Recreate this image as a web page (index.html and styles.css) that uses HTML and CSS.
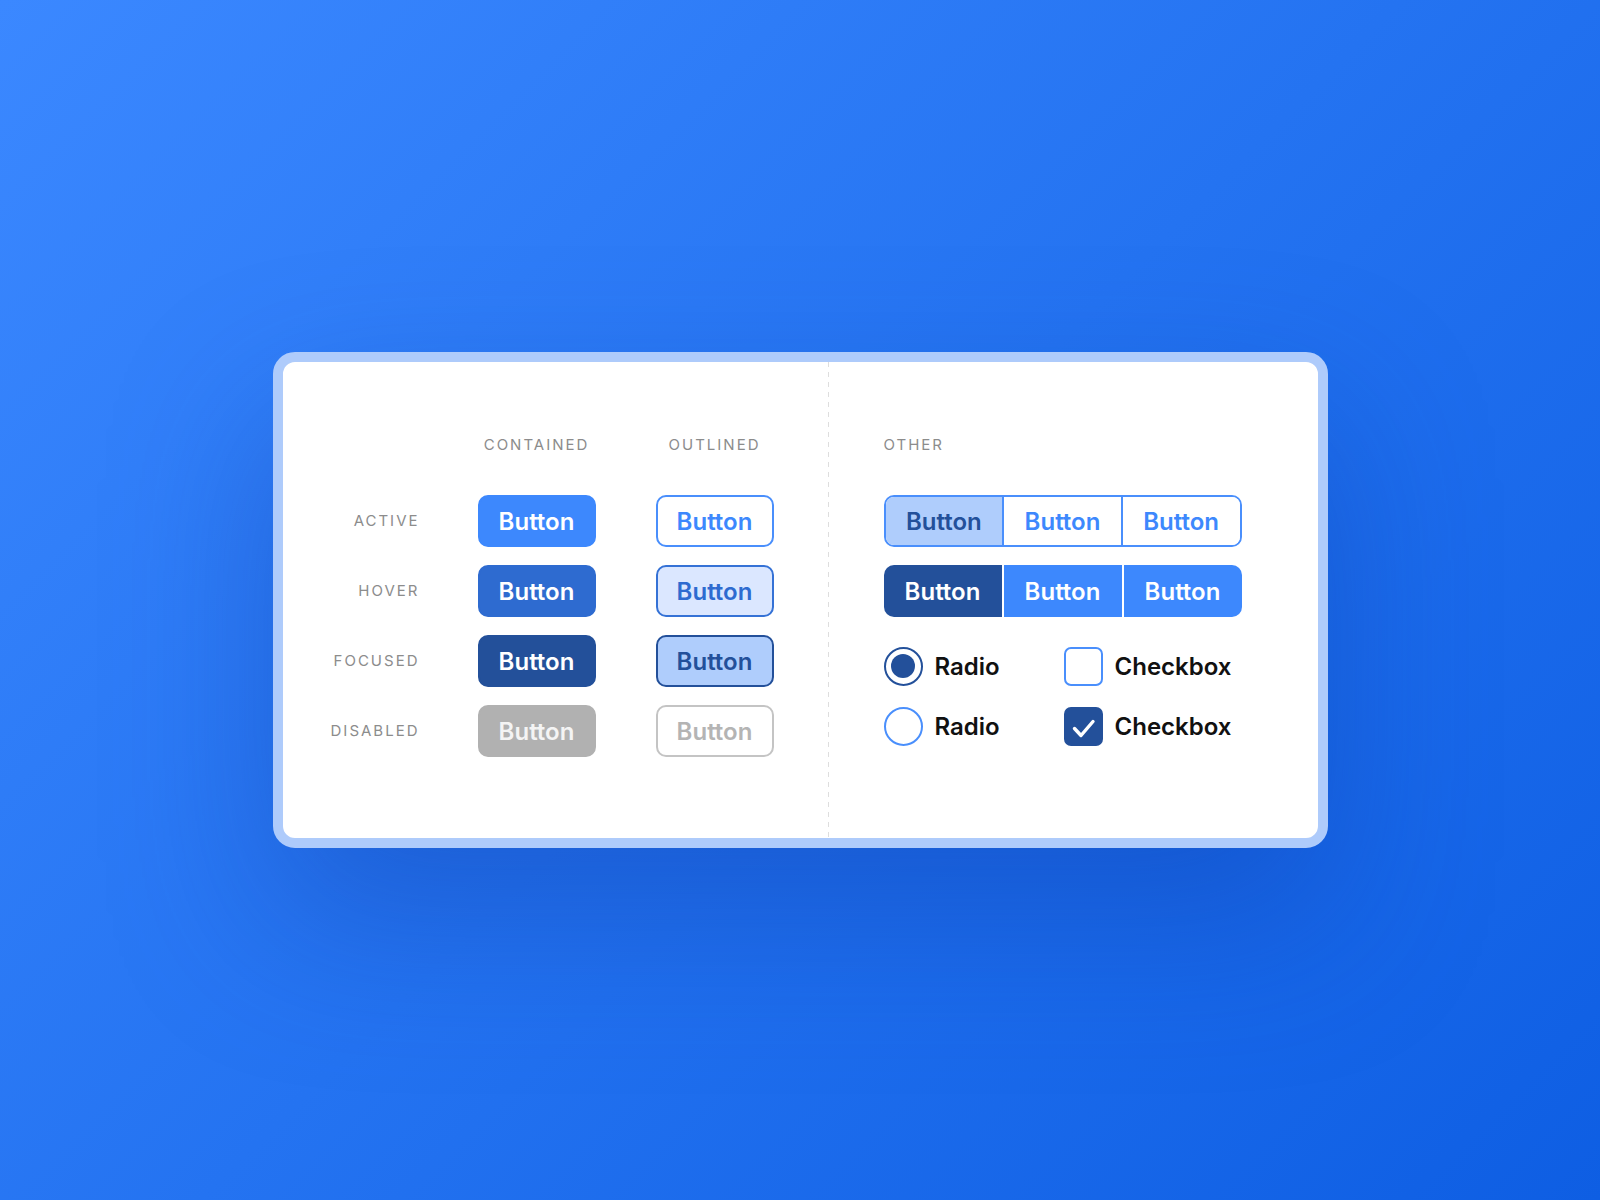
FILE: index.html
```html
<!DOCTYPE html>
<html lang="en">
<head>
    <meta charset="UTF-8">
    <meta name="viewport" content="width=device-width, initial-scale=1.0">
    <title>Button States</title>
    <link rel="stylesheet" href="styles.css">
</head>
<body>
    <div class="card">
        <div class="panel states">
            <div class="states-grid">
                <span></span>
                <span class="col-label">CONTAINED</span>
                <span class="col-label">OUTLINED</span>

                <span class="row-label">ACTIVE</span>
                <button class="btn contained">Button</button>
                <button class="btn outlined">Button</button>

                <span class="row-label">HOVER</span>
                <button class="btn contained hover">Button</button>
                <button class="btn outlined hover">Button</button>

                <span class="row-label">FOCUSED</span>
                <button class="btn contained focused">Button</button>
                <button class="btn outlined focused">Button</button>

                <span class="row-label">DISABLED</span>
                <button class="btn contained disabled">Button</button>
                <button class="btn outlined disabled">Button</button>
            </div>
        </div>

        <div class="divider"></div>

        <div class="panel other">
            <span class="col-label">OTHER</span>

            <div class="segmented light">
                <button class="seg selected">Button</button>
                <button class="seg">Button</button>
                <button class="seg">Button</button>
            </div>

            <div class="segmented solid">
                <button class="seg selected">Button</button>
                <button class="seg">Button</button>
                <button class="seg">Button</button>
            </div>

            <div class="choices">
                <label class="choice">
                    <span class="radio checked"><span class="dot"></span></span>
                    Radio
                </label>
                <label class="choice">
                    <span class="checkbox"></span>
                    Checkbox
                </label>
                <label class="choice">
                    <span class="radio"></span>
                    Radio
                </label>
                <label class="choice">
                    <span class="checkbox checked">
                        <svg width="39" height="39" viewBox="0 0 39 39">
                            <polyline points="10.5,21.5 17,28.5 29,14.5" fill="none" stroke="#fff" stroke-width="3.4" stroke-linecap="round" stroke-linejoin="round"/>
                        </svg>
                    </span>
                    Checkbox
                </label>
            </div>
        </div>
    </div>
</body>
</html>
```

FILE: styles.css
```css
html, body {
    margin: 0;
    height: 100%;
}
body {
    font-family: Inter, "Noto Sans", sans-serif;
    background: linear-gradient(135deg, #3b88ff 0%, #2473f1 50%, #0e5ee3 100%);
    display: flex;
    align-items: center;
    justify-content: center;
}
.card {
    display: flex;
    width: 1035px;
    background-color: white;
    border: 10px solid #aecbfb;
    border-radius: 22px;
    box-shadow: 0 70px 160px rgba(12, 55, 160, 0.35);
}
.panel {
    padding-top: 72px;
}
.states {
    width: 545px;
    padding-bottom: 81px;
}
.divider {
    width: 1px;
    background: repeating-linear-gradient(to bottom, #dedede 0 5px, transparent 5px 10px);
}
.other {
    flex: 1;
    padding-left: 55px;
    display: flex;
    flex-direction: column;
    align-items: flex-start;
}
.states-grid {
    display: grid;
    grid-template-columns: 135px 118px 118px;
    grid-template-rows: 43px repeat(4, 52px);
    column-gap: 60px;
    row-gap: 18px;
}
.col-label,
.row-label {
    font-size: 15px;
    line-height: 22px;
    letter-spacing: 2px;
    color: #8c8c8c;
}
.col-label {
    text-align: center;
    align-self: start;
}
.row-label {
    text-align: right;
    align-self: center;
    margin-right: -2px;
}
.other .col-label {
    margin-bottom: 39px;
}
.btn {
    font-family: inherit;
    font-size: 24px;
    font-weight: 600;
    height: 52px;
    border-radius: 10px;
    border: 2px solid transparent;
    padding: 0;
    cursor: pointer;
}
.btn.contained {
    background-color: #3d88fd;
    border-color: #3d88fd;
    color: white;
}
.btn.contained.hover {
    background-color: #2e6bd0;
    border-color: #2e6bd0;
}
.btn.contained.focused {
    background-color: #23509a;
    border-color: #23509a;
}
.btn.contained.disabled {
    background-color: #b1b1b1;
    border-color: #b1b1b1;
    color: #f4f4f4;
}
.btn.outlined {
    background-color: white;
    border-color: #4a8ffc;
    color: #3d88fd;
}
.btn.outlined.hover {
    background-color: #dbe7ff;
    border-color: #3572d6;
    color: #2e6bd0;
}
.btn.outlined.focused {
    background-color: #afcdfc;
    border-color: #23509a;
    color: #23509a;
}
.btn.outlined.disabled {
    border-color: #c4c4c4;
    color: #b4b4b4;
}
.segmented {
    display: flex;
    width: 358px;
    height: 52px;
    border-radius: 10px;
    overflow: hidden;
    box-sizing: border-box;
}
.seg {
    flex: 1;
    font-family: inherit;
    font-size: 24px;
    font-weight: 600;
    border: none;
    padding: 0;
    cursor: pointer;
}
.segmented.light {
    border: 2px solid #4a8ffc;
}
.segmented.light .seg {
    background-color: white;
    color: #3d88fd;
}
.segmented.light .seg + .seg {
    border-left: 2px solid #4a8ffc;
}
.segmented.light .seg.selected {
    background-color: #afcdfc;
    color: #23509a;
}
.segmented.solid {
    margin-top: 18px;
}
.segmented.solid .seg {
    background-color: #3d88fd;
    color: white;
}
.segmented.solid .seg + .seg {
    border-left: 2px solid white;
}
.segmented.solid .seg.selected {
    background-color: #23509a;
}
.choices {
    display: grid;
    grid-template-columns: 180px auto;
    row-gap: 20px;
    margin-top: 29px;
}
.choice {
    display: flex;
    align-items: center;
    gap: 12px;
    height: 40px;
    font-size: 24px;
    font-weight: 600;
    color: #111;
}
.radio {
    width: 39px;
    height: 39px;
    box-sizing: border-box;
    border-radius: 50%;
    border: 2px solid #4a8ffc;
    display: flex;
    align-items: center;
    justify-content: center;
}
.radio.checked {
    border: 2.5px solid #23509a;
}
.radio .dot {
    width: 24px;
    height: 24px;
    border-radius: 50%;
    background-color: #23509a;
}
.checkbox {
    width: 39px;
    height: 39px;
    box-sizing: border-box;
    border-radius: 7px;
    border: 2px solid #4a8ffc;
}
.checkbox.checked {
    border: none;
    background-color: #23509a;
}
.checkbox svg {
    display: block;
}
```
